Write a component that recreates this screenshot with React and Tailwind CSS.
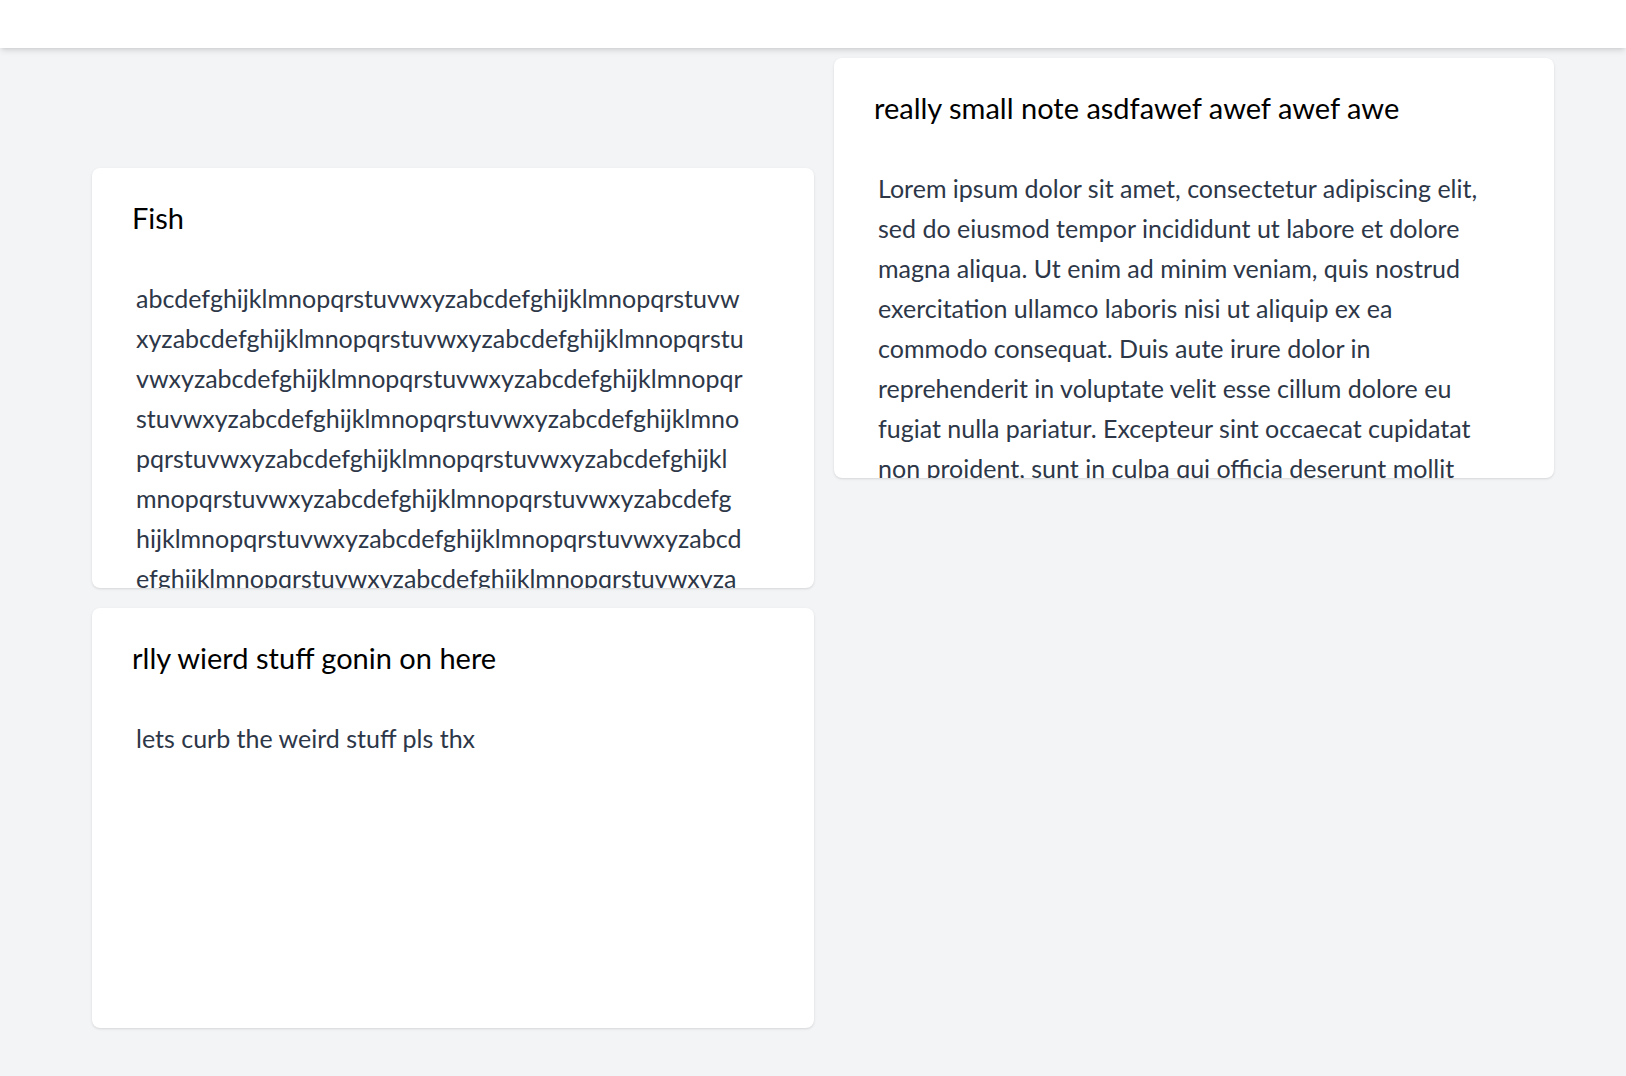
const alphabet = "abcdefghijklmnopqrstuvwxyz".repeat(20);

const lorem =
  "Lorem ipsum dolor sit amet, consectetur adipiscing elit, sed do eiusmod tempor incididunt ut labore et dolore magna aliqua. Ut enim ad minim veniam, quis nostrud exercitation ullamco laboris nisi ut aliquip ex ea commodo consequat. Duis aute irure dolor in reprehenderit in voluptate velit esse cillum dolore eu fugiat nulla pariatur. Excepteur sint occaecat cupidatat non proident, sunt in culpa qui officia deserunt mollit anim id est laborum.";

const Note = ({ title, children }) => (
  <div className="h-[420px] overflow-hidden rounded-lg bg-white px-10 pt-8 shadow-sm">
    <h2 className="text-[29px] leading-9 text-black">{title}</h2>
    <p className="mt-[42px] w-[616px] px-1 text-[25px] leading-10 text-[#2d3748] break-words">
      {children}
    </p>
  </div>
);

const App = () => {
  return (
    <div className="min-h-screen bg-[#f3f4f6] font-['Lato',sans-serif]">
      <header className="h-12 bg-white shadow-md" />
      <main className="flex items-start gap-5 pl-[92px] pt-[10px]">
        <div className="flex w-[722px] flex-col gap-5 pt-[110px]">
          <Note title="Fish">{alphabet}</Note>
          <Note title="rlly wierd stuff gonin on here">lets curb the weird stuff pls thx</Note>
        </div>
        <div className="flex w-[720px] flex-col gap-5">
          <Note title="really small note asdfawef awef awef awe">{lorem}</Note>
        </div>
      </main>
    </div>
  );
};

export default App;
